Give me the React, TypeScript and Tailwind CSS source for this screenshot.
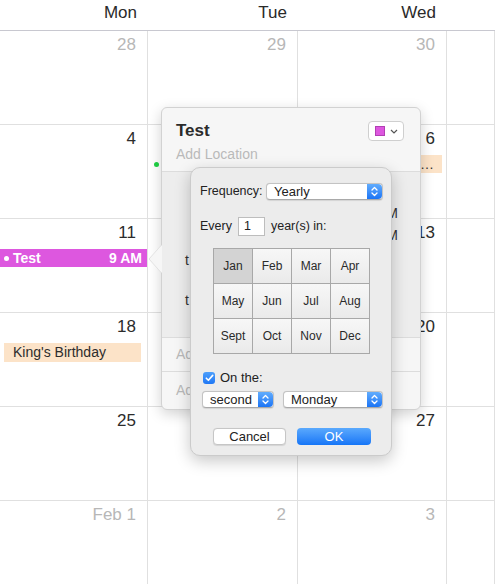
import React from "react";

const F = { fontFamily: '"Liberation Sans", Arial, sans-serif' };

function Stepper() {
  return (
    <div className="flex h-full w-[15px] items-center justify-center rounded-r-[4px] bg-gradient-to-b from-[#61acfd] to-[#1a74f5]">
      <svg width="7" height="11" viewBox="0 0 7 11" fill="none" stroke="white" strokeWidth="1.3" strokeLinecap="round" strokeLinejoin="round">
        <path d="M1 4 L3.5 1.5 L6 4" />
        <path d="M1 7 L3.5 9.5 L6 7" />
      </svg>
    </div>
  );
}

function Select({ label, w }: { label: string; w: string }) {
  return (
    <div className={`flex h-[17px] ${w} items-stretch rounded-[4px] border border-[#c3c3c3] border-b-[#a9a9a9] bg-white shadow-[0_0.5px_1px_rgba(0,0,0,0.1)]`}>
      <div className="flex flex-1 items-center pl-[7px] text-[13px] text-[#222]">{label}</div>
      <Stepper />
    </div>
  );
}

const months = ["Jan", "Feb", "Mar", "Apr", "May", "Jun", "Jul", "Aug", "Sept", "Oct", "Nov", "Dec"];

function Cell({ n, gray, children }: { n: string; gray?: boolean; children?: React.ReactNode }) {
  return (
    <div className="relative h-[94px] border-r border-b border-[#e0e0e0]">
      <div className={`h-[24px] pr-[11px] pt-[4px] text-right text-[17px] leading-[20px] ${gray ? "text-[#b7b7b7]" : "text-[#2c2c2c]"}`}>{n}</div>
      {children}
    </div>
  );
}

export default function App() {
  return (
    <div className="relative h-[584px] w-[495px] overflow-hidden bg-white" style={F}>
      {/* header */}
      <div className="grid h-[31px] grid-cols-[148px_150px_149px_1fr] border-b border-[#c8c8d0]">
        <div className="pr-[11px] pt-[3px] text-right text-[17px] leading-[20px] text-[#2a2a2a]">Mon</div>
        <div className="pr-[11px] pt-[3px] text-right text-[17px] leading-[20px] text-[#2a2a2a]">Tue</div>
        <div className="pr-[11px] pt-[3px] text-right text-[17px] leading-[20px] text-[#2a2a2a]">Wed</div>
        <div />
      </div>
      {/* grid */}
      <div className="grid grid-cols-[148px_150px_149px_1fr]">
        <Cell n="28" gray />
        <Cell n="29" gray />
        <Cell n="30" gray />
        <Cell n="" />

        <Cell n="4" />
        <Cell n="" />
        <Cell n="6">
          <div className="mx-[4px] mt-[6px] flex h-[18px] items-center justify-end bg-[#fce3c8] pr-[8px] text-[14px] text-[#333]">…</div>
        </Cell>
        <Cell n="" />

        <Cell n="11">
          <div className="mt-[6px] flex h-[18px] items-center bg-[#dd57df] pl-[4px] pr-[5px] text-[14px] font-bold text-white">
            <span className="mr-[4px] h-[5px] w-[5px] rounded-full bg-white" />
            <span>Test</span>
            <span className="ml-auto">9 AM</span>
          </div>
        </Cell>
        <Cell n="" />
        <Cell n="13" />
        <Cell n="" />

        <Cell n="18">
          <div className="ml-[4px] mr-[6px] mt-[6px] flex h-[19px] items-center bg-[#fce3c8] pl-[9px] text-[14px] text-[#2c2c2c]">King's Birthday</div>
        </Cell>
        <Cell n="" />
        <Cell n="20" />
        <Cell n="" />

        <Cell n="25" />
        <Cell n="" />
        <Cell n="27" />
        <Cell n="" />

        <Cell n="Feb 1" gray />
        <Cell n="2" gray />
        <Cell n="3" gray />
        <Cell n="" />
      </div>

      {/* green dot */}
      <div className="absolute left-[154px] top-[162px] h-[5px] w-[5px] rounded-full bg-[#1fd244]" />

      {/* event popover */}
      <div className="absolute left-[161px] top-[107px] flex h-[303px] w-[260px] flex-col rounded-[6px] border border-[#d2d2d2] bg-[#f6f6f6] shadow-[0_4px_14px_rgba(0,0,0,0.18)]">
        <div className="relative h-[64px] border-b border-[#dcdcdc] px-[14px] pt-[13px]">
          <div className="text-[17px] font-bold leading-[20px] text-[#2b2b2b]">Test</div>
          <div className="mt-[5px] text-[14px] leading-[17px] text-[#bababa]">Add Location</div>
          <div className="absolute right-[16px] top-[13px] flex h-[20px] w-[36px] items-center rounded-[4px] border border-[#cfcfcf] bg-white pl-[6px]">
            <div className="h-[10px] w-[10px] border border-[#b23fb4] bg-[#dd57df]" />
            <svg className="ml-[5px]" width="8" height="5" viewBox="0 0 8 5" fill="none" stroke="#555" strokeWidth="1.2">
              <path d="M1 1 L4 4 L7 1" />
            </svg>
          </div>
        </div>
        <div className="relative h-[166px] border-b border-[#dcdcdc] bg-[#ededed] text-[14px] text-[#333]">
          <span className="absolute right-[22px] top-[31px]">M</span>
          <span className="absolute right-[22px] top-[53px]">M</span>
          <span className="absolute left-[23px] top-[78px]">t</span>
          <span className="absolute left-[23px] top-[118px]">t</span>
        </div>
        <div className="flex h-[34px] items-center border-b border-[#dcdcdc] pl-[14px] text-[14px] text-[#bababa]">Ad</div>
        <div className="flex flex-1 items-center pl-[14px] text-[14px] text-[#bababa]">Ad</div>
      </div>

      {/* arrow */}
      <svg className="absolute left-[148px] top-[244px]" width="14" height="30" viewBox="0 0 14 30">
        <path d="M14 1 L1 15 L14 29 Z" fill="#f6f6f6" />
        <path d="M13.5 1 L1 15 L13.5 29" fill="none" stroke="#e2e2e2" strokeWidth="1" />
      </svg>

      {/* recurrence popover */}
      <div className="absolute left-[190px] top-[167px] h-[289px] w-[202px] rounded-[10px] border border-[#cbcbcb] bg-[#ececec] px-[9px] text-[12.5px] text-[#222] shadow-[0_5px_16px_rgba(0,0,0,0.22)]">
        <div className="mt-[15px] flex h-[17px] items-center">
          <span>Frequency:</span>
          <div className="ml-auto mr-[-1px]">
            <Select label="Yearly" w="w-[117px]" />
          </div>
        </div>
        <div className="mt-[17px] flex h-[19px] items-center">
          <span>Every</span>
          <div className="ml-[6px] flex h-[19px] w-[27px] items-center border border-[#bdbdbd] bg-white pl-[5px]">1</div>
          <span className="ml-[6px]">year(s) in:</span>
        </div>
        <div className="ml-[13px] mt-[12px] grid w-[157px] grid-cols-4 border-l border-t border-[#a8a8a8]">
          {months.map((m, i) => (
            <div
              key={m}
              className={`flex h-[35px] items-center justify-center border-b border-r border-[#a8a8a8] text-[12px] text-[#2a2a2a] ${i === 0 ? "bg-[#d3d3d3]" : "bg-gradient-to-b from-[#f7f7f7] to-[#eaeaea]"}`}
            >
              {m}
            </div>
          ))}
        </div>
        <div className="mt-[18px] flex h-[12px] items-center">
          <div className="ml-[3px] flex h-[12px] w-[12px] items-center justify-center rounded-[3px] bg-gradient-to-b from-[#4d9ffb] to-[#1f77f5]">
            <svg width="9" height="8" viewBox="0 0 9 8" fill="none" stroke="white" strokeWidth="1.6" strokeLinecap="round" strokeLinejoin="round">
              <path d="M1.3 4.2 L3.4 6.3 L7.7 1.4" />
            </svg>
          </div>
          <span className="ml-[5px] text-[13px]">On the:</span>
        </div>
        <div className="mt-[7px] flex items-center">
          <div className="ml-[2px]">
            <Select label="second" w="w-[72px]" />
          </div>
          <div className="ml-[9px]">
            <Select label="Monday" w="w-[100px]" />
          </div>
        </div>
        <div className="mt-[20px] flex items-center">
          <div className="ml-[13px] flex h-[17px] w-[73px] items-center justify-center rounded-[4px] border border-[#c6c6c6] bg-white text-[13px] text-[#222] shadow-[0_0.5px_1px_rgba(0,0,0,0.1)]">Cancel</div>
          <div className="ml-[11px] flex h-[17px] w-[74px] items-center justify-center rounded-[4px] bg-gradient-to-b from-[#5aa9fd] to-[#1475f6] text-[13px] text-white">OK</div>
        </div>
      </div>
    </div>
  );
}
